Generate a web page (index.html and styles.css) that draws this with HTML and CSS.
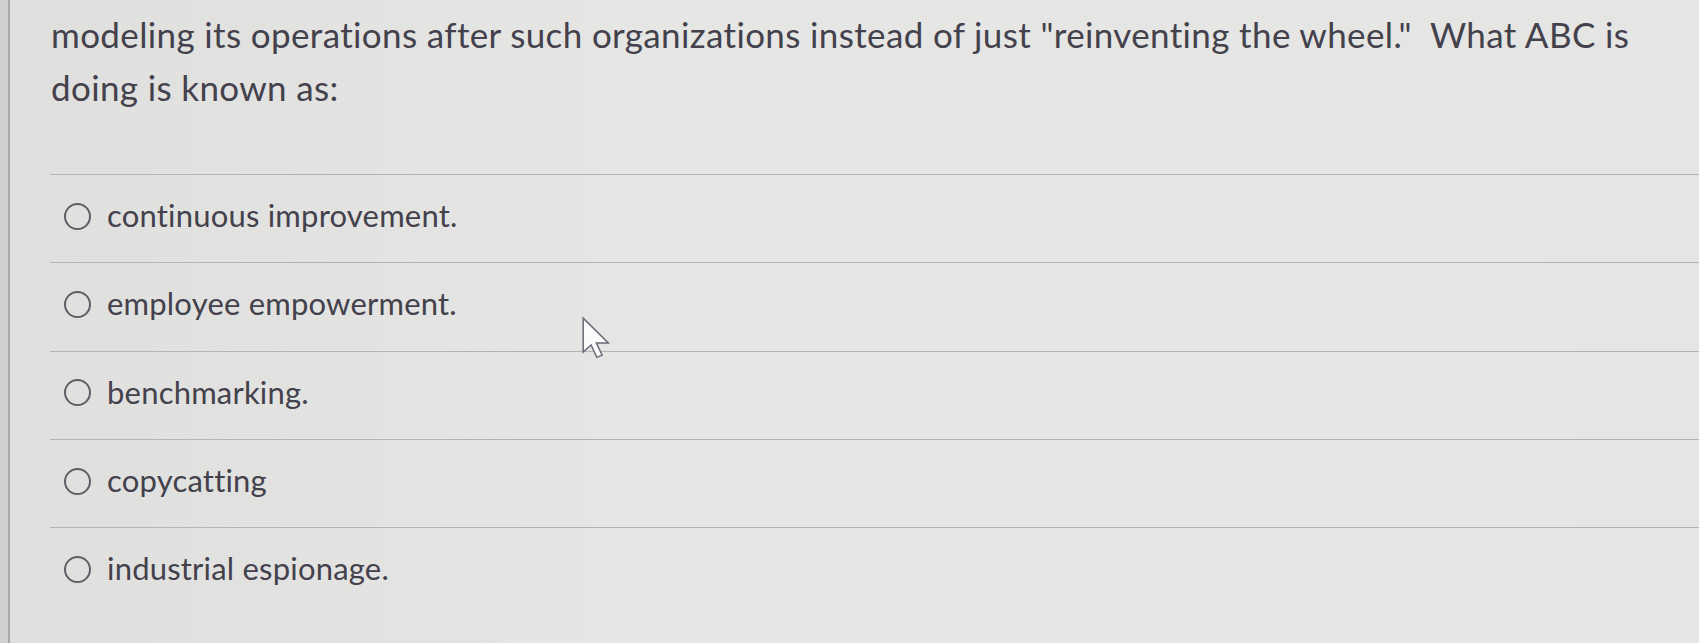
FILE: index.html
```html
<!DOCTYPE html>
<html>
<head>
<meta charset="utf-8">
<link rel="stylesheet" href="styles.css">
</head>
<body>
<div class="screen">
  <div class="edge"></div>
  <div class="content">
    <p class="question">modeling its operations after such organizations instead of just "reinventing the wheel."&nbsp; What ABC is doing is known as:</p>
    <ul class="options">
      <li class="option"><span class="radio"></span><span class="label">continuous improvement.</span></li>
      <li class="option"><span class="radio"></span><span class="label">employee empowerment.</span></li>
      <li class="option"><span class="radio"></span><span class="label">benchmarking.</span></li>
      <li class="option"><span class="radio"></span><span class="label">copycatting</span></li>
      <li class="option"><span class="radio"></span><span class="label">industrial espionage.</span></li>
    </ul>
  </div>
  <svg class="cursor" width="33" height="44" viewBox="0 0 15 20">
    <path d="M1 1 L1 16.4 L4.6 13.2 L7.2 18.8 L9.6 17.8 L7 12.3 L12.4 12.3 Z" fill="#fbfbfb" stroke="#6f6a78" stroke-width="0.7" stroke-linejoin="miter"/>
  </svg>
</div>
</body>
</html>
```
FILE: styles.css
```css
html, body {
  margin: 0;
  padding: 0;
}
body {
  width: 1699px;
  height: 643px;
  overflow: hidden;
  background: #e3e3e1;
  font-family: Lato, "Noto Sans", sans-serif;
  color: #43414c;
}
.screen {
  position: relative;
  display: flex;
  height: 643px;
  background: linear-gradient(90deg, #dfdfdd 0%, #e6e6e4 40%, #e5e5e3 100%);
}
.edge {
  width: 8px;
  flex: none;
  background: #cfcfcd;
  border-right: 2px solid #a9a9a9;
}
.content {
  flex: 1;
  padding-left: 41px;
  padding-top: 7.5px;
}
.question {
  margin: 0;
  font-size: 35px;
  line-height: 53px;
  letter-spacing: 0.36px;
  width: 1620px;
}
.options {
  list-style: none;
  margin: 60.5px 0 0 -1px;
  padding: 0;
}
.option {
  display: flex;
  align-items: center;
  height: 82.3px;
  padding-bottom: 5px;
  border-top: 1px solid #b4b4b3;
  padding-left: 14px;
}
.radio {
  width: 23px;
  height: 23px;
  border: 2px solid #5f5e66;
  border-radius: 50%;
  flex: none;
  margin-right: 16px;
}
.label {
  font-size: 31px;
  letter-spacing: 0.2px;
  position: relative;
  top: -1px;
}
.cursor {
  position: absolute;
  left: 581px;
  top: 316px;
}
```
